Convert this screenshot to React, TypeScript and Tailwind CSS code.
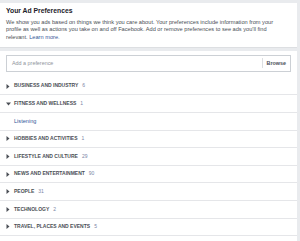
const categories = [
    { label: 'BUSINESS AND INDUSTRY', count: 6, open: false },
    { label: 'FITNESS AND WELLNESS', count: 1, open: true, items: ['Listening'] },
    { label: 'HOBBIES AND ACTIVITIES', count: 1, open: false },
    { label: 'LIFESTYLE AND CULTURE', count: 29, open: false },
    { label: 'NEWS AND ENTERTAINMENT', count: 90, open: false },
    { label: 'PEOPLE', count: 31, open: false },
    { label: 'TECHNOLOGY', count: 2, open: false },
    { label: 'TRAVEL, PLACES AND EVENTS', count: 5, open: false },
];

const Caret = ({ open }: { open: boolean }) =>
    open ? (
        <svg width="5" height="4" viewBox="0 0 5 4" className="mr-[3px]">
            <path d="M0 0.5 H5 L2.5 3.5 Z" fill="#4b4f56" />
        </svg>
    ) : (
        <svg width="4" height="5" viewBox="0 0 4 5" className="mr-[4px]">
            <path d="M0.5 0 V5 L3.5 2.5 Z" fill="#4b4f56" />
        </svg>
    );

export default function App() {
    return (
        <div className="w-[300px] h-[241px] overflow-hidden bg-[#e9ebee] pt-[3px] pr-[3px] font-['Liberation_Sans',Arial,sans-serif]">
            {/* header card */}
            <div className="bg-white border-b border-[#dddfe2] px-[6px] pt-[3px] pb-[6px]">
                <h1 className="text-[6.8px] leading-[9px] font-bold text-[#1d2129]">Your Ad Preferences</h1>
                <p className="mt-[4px] text-[5.65px] leading-[7.3px] text-[#4b4f56] whitespace-nowrap">
                    We show you ads based on things we think you care about. Your preferences include information from your
                    <br />
                    profile as well as actions you take on and off Facebook. Add or remove preferences to see ads you'll find
                    <br />
                    relevant. <span className="text-[#365899]">Learn more.</span>
                </p>
            </div>

            {/* preferences card */}
            <div className="mt-[3px] bg-white h-full">
                <div className="px-[6px] pt-[4px] pb-[6px]">
                    <div className="h-[17px] border border-[#ccd0d5] flex items-center">
                        <span className="flex-1 pl-[5px] text-[5.4px] text-[#90949c]">Add a preference</span>
                        <span className="h-[10px] border-l border-[#dddfe2]" />
                        <span className="px-[4px] text-[5.4px] font-bold text-[#4b4f56]">Browse</span>
                    </div>
                </div>
                {categories.map((cat) => (
                    <div key={cat.label}>
                        <div className="h-[17.6px] border-b border-[#e5e6e9] flex items-center pl-[6px]">
                            <Caret open={cat.open} />
                            <span className="text-[5px] font-bold text-[#4b4f56]">{cat.label}</span>
                            <span className="ml-[4px] text-[5px] text-[#7b85a6]">{cat.count}</span>
                        </div>
                        {cat.items?.map((item) => (
                            <div key={item} className="h-[17.6px] border-b border-[#e5e6e9] flex items-center pl-[14px]">
                                <span className="text-[5.6px] text-[#365899]">{item}</span>
                            </div>
                        ))}
                    </div>
                ))}
            </div>
        </div>
    );
}
